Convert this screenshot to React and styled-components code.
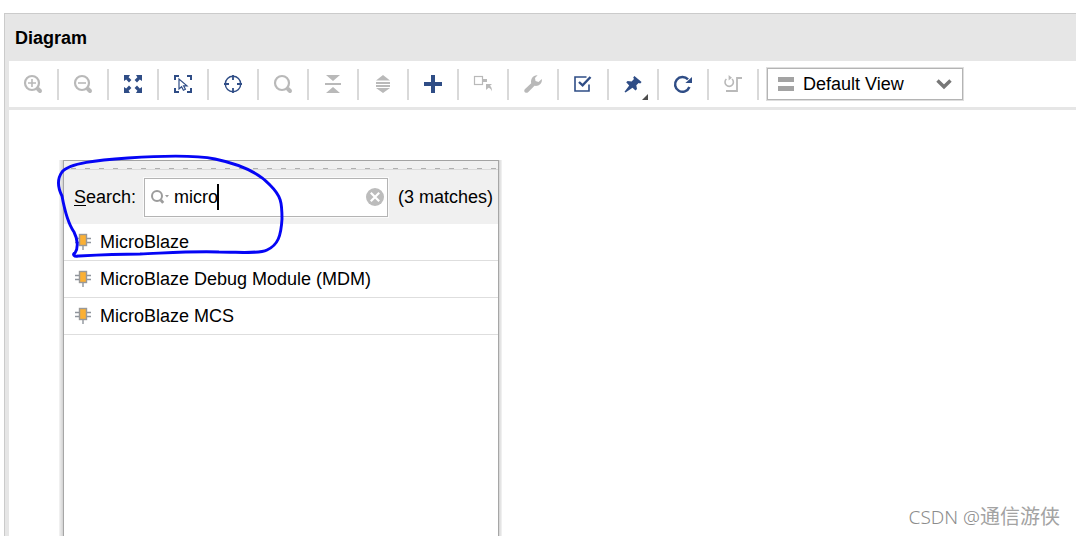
import React, { useState } from "react";
import styled, { createGlobalStyle } from "styled-components";

const GlobalStyle = createGlobalStyle`
  * { box-sizing: border-box; }
  body {
    margin: 0;
    background: #fff;
    color: #000;
    font-family: "Liberation Sans", Arial, sans-serif;
    font-size: 18px;
    line-height: 20px;
  }
  button, input, select { font: inherit; color: inherit; }
`;

const Page = styled.div`
  position: relative;
  display: flex;
  flex-direction: column;
  min-height: 100vh;
  padding: 13px 0 0 4px;
`;

const Frame = styled.main`
  flex: 1;
  display: flex;
  flex-direction: column;
  padding-left: 4px;
  border-top: 1px solid #cbcbcb;
  border-left: 1px solid #cbcbcb;
  background: #e6e6e6;
`;

const TitleBar = styled.header`
  display: flex;
  align-items: center;
  height: 47px;
  padding-left: 6px;
`;

const Title = styled.h1`
  margin: 0;
  font-size: 18px;
  line-height: 20px;
`;

const Toolbar = styled.div`
  display: flex;
  align-items: center;
  height: 49px;
  background: #fff;
  border-bottom: 3px solid #e6e6e6;
`;

const ToolButton = styled.button`
  flex: none;
  display: flex;
  align-items: center;
  justify-content: center;
  width: 50px;
  height: 31px;
  padding: 0;
  border: 0;
  border-right: 2px solid #d9d9d9;
  background: none;
  color: ${(p) => (p.$muted ? "#b9b9b9" : "#2f4d86")};
`;

const Icon = styled.svg`
  flex: none;
  display: block;
  overflow: visible;
`;

const SelectBox = styled.label`
  flex: none;
  display: grid;
  grid-template-columns: 36px 1fr 26px;
  align-items: center;
  width: 196px;
  height: 32px;
  margin-left: 8px;
  border: 1px solid #b4b4b4;
  outline: 1px solid #dedede;
  background: #fff;

  > * { grid-row: 1; }
  > svg:first-child { grid-column: 1; margin-left: 10px; }
  > svg:last-child { grid-column: 3; pointer-events: none; }
`;

const Select = styled.select`
  grid-column: 1 / -1;
  height: 28px;
  padding: 0 30px 0 35px;
  border: 0;
  outline: 0;
  appearance: none;
  background: transparent;
`;

const Canvas = styled.section`
  flex: 1;
  display: flex;
  padding: 50px 0 0 50px;
  background: #fff;
`;

const Popup = styled.div`
  position: relative;
  display: flex;
  width: 443px;
`;

const Edge = styled.div`
  width: ${(p) => (p.$left ? 5 : 4)}px;
  background: linear-gradient(
    to ${(p) => (p.$left ? "right" : "left")},
    #f4f4f4,
    #d2d2d2 80%,
    #a6a6a6 80%
  );
`;

const Panel = styled.div`
  flex: 1;
  border-top: 1px solid #a3a3a3;
  background: #fff;
`;

const Grip = styled.div`
  height: 9px;
  padding: 7px 0 0 7px;
  background: #f0f0f0;
  border-bottom: 1px solid #dadada;

  &::before {
    content: "";
    display: block;
    height: 1px;
    background: repeating-linear-gradient(to right, #b0b0b0 0 5px, transparent 5px 14px);
  }
`;

const SearchRow = styled.div`
  display: flex;
  align-items: center;
  height: 54px;
  padding: 0 5px 0 10px;
  background: #f0f0f0;
  white-space: nowrap;
`;

const SearchLabel = styled.label`
  width: 70px;
`;

const Mnemonic = styled.span`
  text-decoration: underline;
  text-decoration-thickness: 1px;
  text-underline-offset: 2px;
`;

const SearchField = styled.div`
  display: flex;
  align-items: center;
  flex: 1;
  height: 39px;
  margin-right: 10px;
  padding: 0 3px 0 6px;
  border: 1px solid #b4b4b4;
  outline: 1px solid #fafafa;
  background: #fff;
`;

const SearchInput = styled.input`
  field-sizing: content;
  min-width: 0;
  margin-left: 5px;
  padding: 0;
  border: 0;
  outline: 0;
  background: none;
`;

const Caret = styled.span`
  width: 2px;
  height: 26px;
  margin-left: -1px;
  background: #000;
`;

const ClearButton = styled.button`
  margin-left: auto;
  padding: 0;
  border: 0;
  background: none;
`;

const Results = styled.ul`
  margin: 0;
  padding: 0;
  list-style: none;
`;

const Result = styled.li`
  display: flex;
  align-items: center;
  gap: 9px;
  height: 37px;
  padding-left: 11px;
  border-bottom: 1px solid #dedede;
`;

const Scribble = styled.svg`
  position: absolute;
  top: -8px;
  left: -4px;
  pointer-events: none;
`;

const Watermark = styled.div`
  position: absolute;
  right: 16px;
  bottom: 6px;
  color: #a3a3a3;
  font-family: "Noto Sans CJK SC", sans-serif;
  font-size: 20px;
  line-height: 26px;
`;

const Site = styled.span`
  font-family: "Noto Sans", sans-serif;
  font-weight: 300;
  font-size: 19px;
  color: #8c8c8c;
`;

const lens = <circle cx="8" cy="8" r="7" fill="none" stroke="currentColor" strokeWidth="2.2" />;
const knob = <path d="M14 14l2 2" stroke="currentColor" strokeWidth="4" strokeLinecap="round" />;

const tools = [
  { name: "Zoom in", muted: true, art: <>{lens}{knob}<path d="M4 8h8M8 4v8" stroke="currentColor" strokeWidth="1.6" /></> },
  { name: "Zoom out", muted: true, art: <>{lens}{knob}<path d="M4 8h8" stroke="currentColor" strokeWidth="1.6" /></> },
  {
    name: "Zoom fit",
    art: (
      <path
        d="M0 0h6L4.6 2.2 7.4 5 5 7.4 2.2 4.6 0 6zM18 0h-6l1.4 2.2L10.6 5 13 7.4l2.8-2.8L18 6zM0 18h6l-1.4-2.2L7.4 13 5 10.6l-2.8 2.8L0 12zM18 18h-6l1.4-2.2-2.8-2.8 2.4-2.4 2.8 2.8L18 12z"
        fill="currentColor"
      />
    ),
  },
  {
    name: "Select area",
    art: (
      <>
        <path d="M1 5V1h4M13 1h4v4M17 13v4h-4M5 17H1v-4" fill="none" stroke="currentColor" strokeWidth="2" />
        <path d="M5 4v10l2.6-2.3 1.8 3.6 2-1-1.8-3.4H13z" fill="#fff" stroke="currentColor" strokeWidth="1.2" />
      </>
    ),
  },
  {
    name: "Center view",
    art: (
      <>
        <circle cx="9" cy="9" r="7.7" fill="none" stroke="currentColor" strokeWidth="1.4" />
        <path d="M9 0v5M9 13v5M0 9h5M13 9h5" stroke="currentColor" strokeWidth="1.8" />
      </>
    ),
  },
  { name: "Find", muted: true, art: <>{lens}{knob}</> },
  { name: "Collapse all", muted: true, art: <path d="M2 0h14L9 6zM1 8h16v2H1zM2 18h14l-7-6z" fill="currentColor" /> },
  { name: "Expand all", muted: true, art: <path d="M9 0l7 5.6H2zM2 7h14v2H2zM2 10h14v2H2zM2 13h14l-7 5z" fill="currentColor" /> },
  { name: "Add IP", art: <path d="M7 0h4v7h7v4h-7v7H7v-7H0V7h7z" fill="currentColor" /> },
  {
    name: "Make external",
    muted: true,
    art: (
      <>
        <rect x="0.5" y="1.5" width="8" height="8" fill="none" stroke="currentColor" strokeWidth="1.2" />
        <path d="M9 4h4v3H9zM12 9h6l-2 1.7c1.5 1.4 2 3 2 5.8-.8-2.2-1.9-3.2-3.4-3.7L12 15z" fill="currentColor" />
      </>
    ),
  },
  {
    name: "Customize",
    muted: true,
    art: <path d="M.8 14.2l6.4-6C6.3 4.4 9-.1 13.6.3L11 3.1l.5 3 3 .8L17.8 4c.8 4.4-3.2 7.6-7.3 6.8l-6.4 6.4c-2.3 1.8-5-.8-3.3-3z" fill="currentColor" />,
  },
  {
    name: "Validate design",
    art: (
      <>
        <path d="M12.5 2H1v14h14V9.5" fill="none" stroke="currentColor" strokeWidth="1.6" />
        <path d="M5 7l3.6 3.4L16.5 2" fill="none" stroke="currentColor" strokeWidth="2.4" />
      </>
    ),
  },
  {
    name: "Pin",
    art: (
      <>
        <path d="M10.4 1l7.2 6-1.4 1.6-1.6-.6-2.3 2.3.7 3.8-1.5 1.5-3-2.8L1.5 17.6.5 16.7 5.2 10.4 2.2 7.3 3.6 6l4 .4L10 4 9.2 2.4z" fill="currentColor" />
        <path d="M24 19v6h-6z" fill="#4d4d4d" />
      </>
    ),
  },
  {
    name: "Regenerate layout",
    art: (
      <>
        <path d="M14 4.4A7.4 7.4 0 1 0 15.4 12" fill="none" stroke="currentColor" strokeWidth="2.5" />
        <path d="M18 2v6h-6.6z" fill="currentColor" />
      </>
    ),
  },
  {
    name: "Optimize routing",
    muted: true,
    art: (
      <>
        <path d="M2.4 4A4.2 4.2 0 1 0 8 4" fill="none" stroke="currentColor" strokeWidth="1.6" />
        <path d="M4.6 0v5.4L8 2.7z" fill="currentColor" />
        <path d="M18 3h-5v13H2" fill="none" stroke="currentColor" strokeWidth="1.8" />
      </>
    ),
  },
];

const matches = ["MicroBlaze", "MicroBlaze Debug Module (MDM)", "MicroBlaze MCS"];

function IpIcon() {
  return (
    <Icon width="16" height="18" viewBox="0 0 16 18" aria-hidden="true">
      <path d="M0 5.5h4M0 9.5h4M12 5.5h4M12 9.5h4M8 13v4" stroke="#8f959c" strokeWidth="1.4" />
      <rect x="4.5" y="1.5" width="7" height="11" fill="#fbb034" stroke="#999" strokeWidth="1.4" />
    </Icon>
  );
}

export default function App() {
  const [query, setQuery] = useState("micro");
  return (
    <Page>
      <GlobalStyle />
      <Frame>
        <TitleBar>
          <Title>Diagram</Title>
        </TitleBar>
        <Toolbar role="toolbar" aria-label="Diagram tools">
          {tools.map((tool) => (
            <ToolButton key={tool.name} type="button" aria-label={tool.name} $muted={tool.muted}>
              <Icon width="18" height="18" viewBox="0 0 18 18" aria-hidden="true">
                {tool.art}
              </Icon>
            </ToolButton>
          ))}
          <SelectBox>
            <Icon width="16" height="14" viewBox="0 0 16 14" aria-hidden="true">
              <path d="M0 0h16v5H0zM0 9h16v5H0z" fill="#a3a3a3" />
            </Icon>
            <Select aria-label="View" defaultValue="default">
              <option value="default">Default View</option>
            </Select>
            <Icon width="16" height="10" viewBox="0 0 16 10" aria-hidden="true">
              <path d="M1.5 1.5L8 7.8l6.5-6.3" fill="none" stroke="#777" strokeWidth="3.4" />
            </Icon>
          </SelectBox>
        </Toolbar>
        <Canvas>
          <Popup role="dialog" aria-label="Add IP">
            <Edge $left />
            <Panel>
              <Grip />
              <SearchRow>
                <SearchLabel htmlFor="ip-search">
                  <Mnemonic>S</Mnemonic>earch:
                </SearchLabel>
                <SearchField>
                  <Icon width="18" height="14" viewBox="0 0 18 14" aria-hidden="true">
                    <circle cx="6" cy="6" r="5" fill="none" stroke="#9c9c9c" strokeWidth="2" />
                    <path d="M9.8 10l2.4 2.8" stroke="#9c9c9c" strokeWidth="2.8" />
                    <path d="M14 5h4l-2 2.4z" fill="#9c9c9c" />
                  </Icon>
                  <SearchInput id="ip-search" value={query} onChange={(e) => setQuery(e.target.value)} />
                  <Caret />
                  <ClearButton type="button" aria-label="Clear search" onClick={() => setQuery("")}>
                    <Icon width="18" height="18" viewBox="0 0 18 18" aria-hidden="true">
                      <circle cx="9" cy="9" r="9" fill="#bcbcbc" />
                      <path d="M4.8 4.8l8.4 8.4M13.2 4.8l-8.4 8.4" stroke="#fff" strokeWidth="2.2" />
                    </Icon>
                  </ClearButton>
                </SearchField>
                <span>(3 matches)</span>
              </SearchRow>
              <Results>
                {matches.map((name) => (
                  <Result key={name}>
                    <IpIcon />
                    {name}
                  </Result>
                ))}
              </Results>
            </Panel>
            <Edge />
            <Scribble width="230" height="108" viewBox="55 152 230 108" aria-hidden="true">
              <path
                d="M78 256C74 257 72 254 75 253C79 247 77 238 74 232C67 222 64 207 62 196C58 188 57 179 62 172C69 163 98 160 128 158C158 156 195 155 215 159C239 164 258 172 270 185C281 196 282 202 282 219C281 236 278 245 267 250C259 254 241 252 219 252C194 251 166 253 140 254C117 254 97 255 79 256"
                fill="none"
                stroke="#0505f5"
                strokeWidth="2.9"
                strokeLinecap="round"
                strokeLinejoin="round"
              />
            </Scribble>
          </Popup>
        </Canvas>
      </Frame>
      <Watermark><Site>CSDN @</Site>通信游侠</Watermark>
    </Page>
  );
}
